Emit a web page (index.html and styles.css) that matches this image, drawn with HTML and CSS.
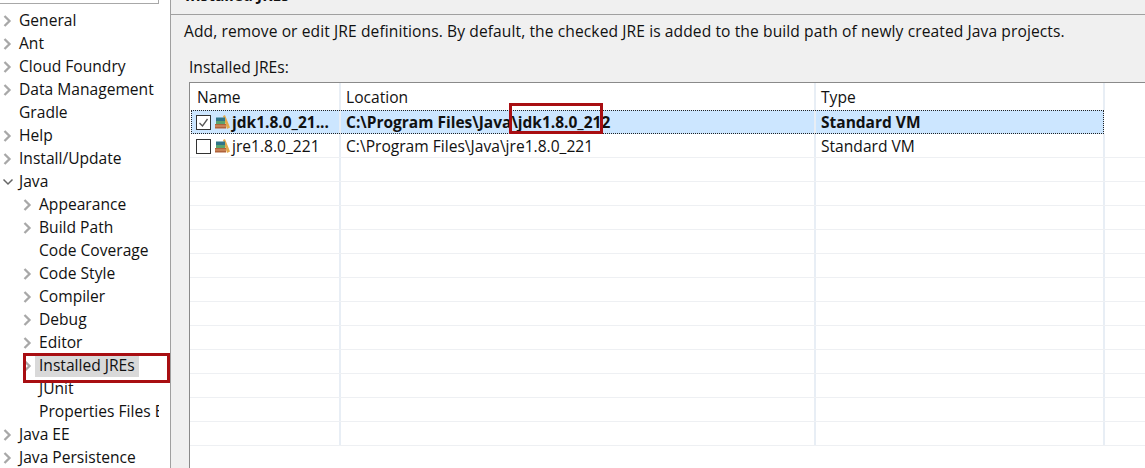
FILE: index.html
```html
<!DOCTYPE html>
<html lang="en">
<head>
<meta charset="utf-8">
<title>Installed JREs</title>
<link rel="stylesheet" href="styles.css">
</head>
<body>
<svg class="defs" width="0" height="0" aria-hidden="true">
  <symbol id="right" viewBox="0 0 10 12"><path d="M1.500 1 6.500 6 1.500 11" fill="none" stroke="#a8a8a8" stroke-width="2.300"/></symbol>
  <symbol id="down" viewBox="0 0 12 10"><path d="M1.500 2.500 6 7 10.500 2.500" fill="none" stroke="#666" stroke-width="1.500"/></symbol>
  <symbol id="jre" viewBox="0 0 15 14">
    <path d="M8 1 10 0 15 12.500 12 14z" fill="#e3a94a"/>
    <rect x="1" y="2.500" width="9" height="3.500" fill="#2f7488"/>
    <rect x="1" y="6" width="9" height="3" fill="#5aa36e"/>
    <rect x="0" y="9" width="11" height="4.500" fill="#b0633a"/>
    <rect x="0" y="10.500" width="11" height="1" fill="#e0a070"/>
  </symbol>
</svg>
<div class="page">
  <aside class="side">
    <div class="filter"></div>
    <ul class="tree">
      <li><svg class="tw"><use href="#right"/></svg>General</li>
      <li><svg class="tw"><use href="#right"/></svg>Ant</li>
      <li><svg class="tw"><use href="#right"/></svg>Cloud Foundry</li>
      <li><svg class="tw"><use href="#right"/></svg>Data Management</li>
      <li><span class="tw"></span>Gradle</li>
      <li><svg class="tw"><use href="#right"/></svg>Help</li>
      <li><svg class="tw"><use href="#right"/></svg>Install/Update</li>
      <li><svg class="tw"><use href="#down"/></svg>Java</li>
      <li class="sub"><svg class="tw"><use href="#right"/></svg>Appearance</li>
      <li class="sub"><svg class="tw"><use href="#right"/></svg>Build Path</li>
      <li class="sub"><span class="tw"></span>Code Coverage</li>
      <li class="sub"><svg class="tw"><use href="#right"/></svg>Code Style</li>
      <li class="sub"><svg class="tw"><use href="#right"/></svg>Compiler</li>
      <li class="sub"><svg class="tw"><use href="#right"/></svg>Debug</li>
      <li class="sub"><svg class="tw"><use href="#right"/></svg>Editor</li>
      <li class="sub"><svg class="tw"><use href="#right"/></svg><span class="current">Installed JREs</span></li>
      <li class="sub"><span class="tw"></span>JUnit</li>
      <li class="sub"><span class="tw"></span>Properties Files Editor</li>
      <li><svg class="tw"><use href="#right"/></svg>Java EE</li>
      <li><svg class="tw"><use href="#right"/></svg>Java Persistence</li>
    </ul>
  </aside>
  <main class="main">
    <header class="title"><h1>Installed JREs</h1></header>
    <p class="desc">Add, remove or edit JRE definitions. By default, the checked JRE is added to the build path of newly created Java projects.</p>
    <div class="label">Installed <u>J</u>REs:</div>
    <div class="table">
      <div class="row head">
        <div class="c1">Name</div><div class="c2">Location</div><div class="c3">Type</div><div class="c4"></div>
      </div>
      <div class="row selected">
        <div class="c1"><span class="check"><svg viewBox="0 0 13 13"><path d="M2.500 7 5.500 10 10.500 3" fill="none" stroke="#555" stroke-width="1.300"/></svg></span><svg class="jre"><use href="#jre"/></svg>jdk1.8.0_21...</div>
        <div class="c2">C:\Program Files\Java\jdk1.8.0_212</div>
        <div class="c3">Standard VM</div>
      </div>
      <div class="row">
        <div class="c1"><span class="check"></span><svg class="jre"><use href="#jre"/></svg>jre1.8.0_221</div>
        <div class="c2">C:\Program Files\Java\jre1.8.0_221</div>
        <div class="c3">Standard VM</div>
        <div class="c4"></div>
      </div>
      <div class="row"><div class="c1"></div><div class="c2"></div><div class="c3"></div><div class="c4"></div></div>
      <div class="row"><div class="c1"></div><div class="c2"></div><div class="c3"></div><div class="c4"></div></div>
      <div class="row"><div class="c1"></div><div class="c2"></div><div class="c3"></div><div class="c4"></div></div>
      <div class="row"><div class="c1"></div><div class="c2"></div><div class="c3"></div><div class="c4"></div></div>
      <div class="row"><div class="c1"></div><div class="c2"></div><div class="c3"></div><div class="c4"></div></div>
      <div class="row"><div class="c1"></div><div class="c2"></div><div class="c3"></div><div class="c4"></div></div>
      <div class="row"><div class="c1"></div><div class="c2"></div><div class="c3"></div><div class="c4"></div></div>
      <div class="row"><div class="c1"></div><div class="c2"></div><div class="c3"></div><div class="c4"></div></div>
      <div class="row"><div class="c1"></div><div class="c2"></div><div class="c3"></div><div class="c4"></div></div>
      <div class="row"><div class="c1"></div><div class="c2"></div><div class="c3"></div><div class="c4"></div></div>
      <div class="row"><div class="c1"></div><div class="c2"></div><div class="c3"></div><div class="c4"></div></div>
      <div class="row"><div class="c1"></div><div class="c2"></div><div class="c3"></div><div class="c4"></div></div>
    </div>
  </main>
</div>
<div class="mark mark-tree"></div>
<div class="mark mark-loc"></div>
</body>
</html>
```
FILE: styles.css
```css
* { box-sizing: border-box; }
html, body { margin: 0; height: 100%; overflow: hidden; }
body { font-family: "Open Sans", "Noto Sans", sans-serif; font-size: 15.6px; color: #111; background: #f0f0f0; position: relative; }
.defs { position: absolute; }
.page { display: flex; height: 468px; }
.side { width: 171px; flex: none; background: #fff; border-right: 1px solid #a0a0a0; padding-right: 11px; overflow: hidden; }
.filter { height: 4px; width: 159px; border-bottom: 1px solid #a8a8a8; border-right: 1px solid #a8a8a8; }
.tree { list-style: none; margin: 5px 0 0; padding: 0; white-space: nowrap; overflow: hidden; }
.tree li { height: 23px; line-height: 23px; display: flex; align-items: center; }
.tree li.sub { padding-left: 20px; }
.tw { width: 12px; height: 12px; margin: 0 5px 0 2px; flex: none; display: block; }
.current { background: #d9d9d9; padding: 0 4px; margin-left: -4px; }
.main { flex: 1; min-width: 0; position: relative; }
.title { height: 15px; border-bottom: 1px solid #a0a0a0; overflow: hidden; position: relative; }
.title h1 { margin: 0; font-size: 15.6px; font-weight: 700; position: absolute; left: 14px; top: -16px; }
.desc { margin: 6px 0 0 13px; height: 20px; line-height: 20px; white-space: nowrap; letter-spacing: 0.09px; }
.label { margin: 16px 0 0 18px; height: 25px; line-height: 20px; }
.label u { text-decoration: underline; }
.table { margin-left: 18px; background: #fff; border-top: 1px solid #8a8a8a; border-left: 1px solid #8a8a8a; height: 400px; overflow: hidden; }
.row { display: flex; height: 24px; border-bottom: 1px solid #eef0f3; line-height: 23px; white-space: nowrap; }
.row > div { border-right: 2px solid #e8eef5; padding: 1px 0 0 5px; display: flex; align-items: center; flex: none; height: 100%; }
.row > .c1 { width: 151px; padding-left: 7px; }
.c2 { width: 475px; }
.c3 { width: 289px; }
.row > .c4 { flex: 1; border-right: 0; }
.head { height: 27px; border-bottom: 0; }
.head > div { padding-top: 2px; }
.selected { background: #cce6ff; font-weight: 700; font-size: 15.5px; outline: 1px dotted #222; outline-offset: -1px; width: 913px; margin-left: 1px; border-bottom: 0; }
.row.selected > div { padding-top: 0; }
.row.selected > .c1 { width: 150px; padding-left: 6px; }
.row.selected > .c3 { border-right: 0; }
.check { width: 15px; height: 15px; border: 1px solid #333; background: #fff; margin: 0 4px 0 -1px; flex: none; display: block; }
.check svg { width: 13px; height: 13px; display: block; }
.jre { width: 15px; height: 14px; margin-right: 2px; flex: none; }
.mark { position: absolute; border: 3px solid #a80e12; }
.mark-tree { left: 23px; top: 353px; width: 147px; height: 30px; }
.mark-loc { left: 509px; top: 103px; width: 94px; height: 31px; }
```
